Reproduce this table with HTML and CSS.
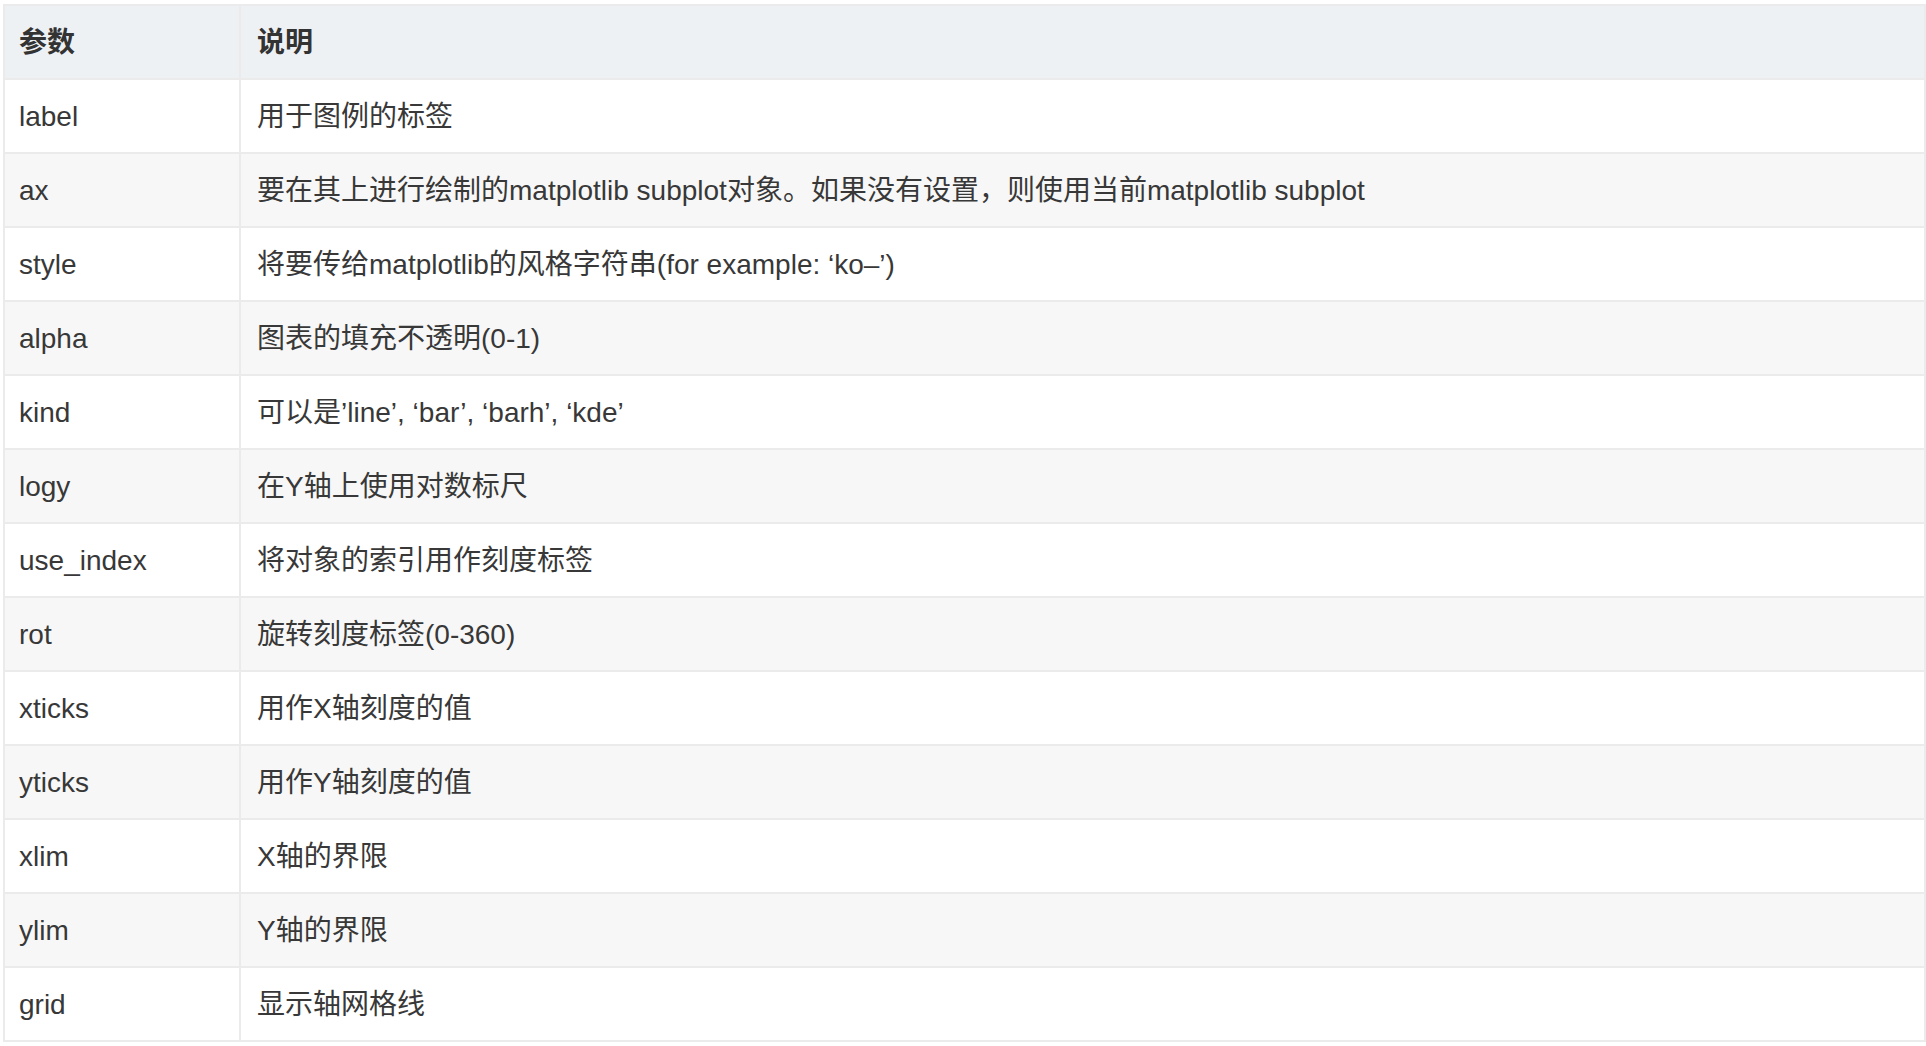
FILE: index.html
```html
<!DOCTYPE html>
<html lang="zh-CN">
<head>
<meta charset="utf-8">
<title>参数</title>
<link rel="stylesheet" href="styles.css">
</head>
<body>
<table class="params">
  <thead>
    <tr><th class="name">参数</th><th class="desc">说明</th></tr>
  </thead>
  <tbody>
    <tr><td class="name">label</td><td class="desc">用于图例的标签</td></tr>
    <tr><td class="name">ax</td><td class="desc">要在其上进行绘制的matplotlib subplot对象。如果没有设置，则使用当前matplotlib subplot</td></tr>
    <tr><td class="name">style</td><td class="desc">将要传给matplotlib的风格字符串(for example: ‘ko–’)</td></tr>
    <tr><td class="name">alpha</td><td class="desc">图表的填充不透明(0-1)</td></tr>
    <tr><td class="name">kind</td><td class="desc">可以是’line’, ‘bar’, ‘barh’, ‘kde’</td></tr>
    <tr><td class="name">logy</td><td class="desc">在Y轴上使用对数标尺</td></tr>
    <tr><td class="name">use_index</td><td class="desc">将对象的索引用作刻度标签</td></tr>
    <tr><td class="name">rot</td><td class="desc">旋转刻度标签(0-360)</td></tr>
    <tr><td class="name">xticks</td><td class="desc">用作X轴刻度的值</td></tr>
    <tr><td class="name">yticks</td><td class="desc">用作Y轴刻度的值</td></tr>
    <tr><td class="name">xlim</td><td class="desc">X轴的界限</td></tr>
    <tr><td class="name">ylim</td><td class="desc">Y轴的界限</td></tr>
    <tr><td class="name">grid</td><td class="desc">显示轴网格线</td></tr>
  </tbody>
</table>
</body>
</html>
```
FILE: styles.css
```css
html, body {
  background: #ffffff;
}
body {
  margin: 4px 0 0 3px;
  font-family: "Liberation Sans", "Noto Sans CJK SC", sans-serif;
  font-size: 28px;
  color: #383838;
}
.params {
  width: 1923px;
  border-collapse: separate;
  border-spacing: 0;
  border-top: 2px solid #ebebeb;
  border-left: 2px solid #ebebeb;
}
.params th,
.params td {
  height: 72px;
  box-sizing: border-box;
  padding: 13px 14px 11px;
  line-height: 48px;
  text-align: left;
  vertical-align: middle;
  border-right: 2px solid #ebebeb;
  border-bottom: 2px solid #ebebeb;
  white-space: nowrap;
}
.params th {
  font-weight: bold;
  background: #eef1f4;
  color: #333333;
}
.params .name {
  width: 236px;
}
.params .desc {
  padding-left: 16px;
}
.params tbody tr {
  background: #ffffff;
}
.params tbody tr:nth-child(even) {
  background: #f7f7f7;
}
```
